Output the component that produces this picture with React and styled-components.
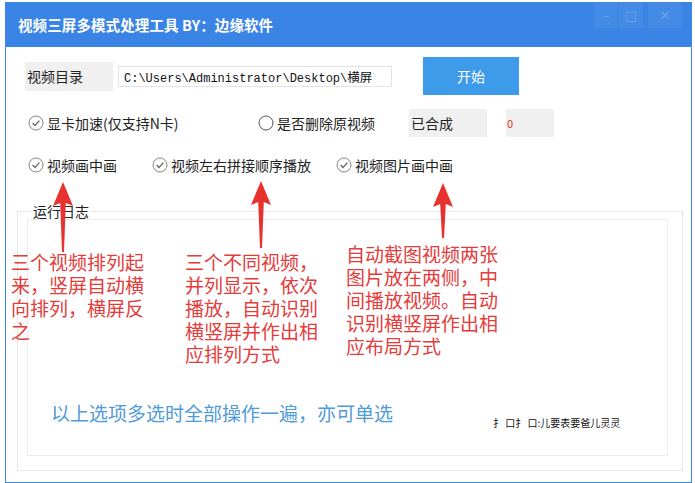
import React from 'react'
import styled, { createGlobalStyle } from 'styled-components'

const GlobalStyle = createGlobalStyle`
  body {
    margin: 0;
    background: #ffffff;
    font-family: "Noto Sans CJK SC", "Noto Sans", sans-serif;
  }
`

const Window = styled.div`
  position: relative;
  box-sizing: border-box;
  margin: 2px 0 0 5px;
  width: 687px;
  height: 481px;
  border: 1px solid #3f87e2;
  display: flex;
  flex-direction: column;
  background: #fff;
  overflow: hidden;
`

const TitleBar = styled.div`
  height: 44px;
  flex-shrink: 0;
  background: #3984e4;
  display: flex;
  justify-content: space-between;
  padding-left: 12px;
`

const Title = styled.div`
  color: #fff;
  font-weight: bold;
  font-size: 14.5px;
  line-height: 44px;
  letter-spacing: 0.1px;
`

const WinButtons = styled.div`
  display: flex;
  gap: 1px;
  height: 25px;
  margin-right: 9px;
`

const WinButton = styled.div`
  width: ${p => p.$w}px;
  margin-left: ${p => p.$gap || 0}px;
  background: rgba(255, 255, 255, 0.06);
  color: rgba(255, 255, 255, 0.22);
  display: flex;
  align-items: center;
  justify-content: center;
  font-family: "DejaVu Sans", sans-serif;
  font-size: 13px;
`

const Body = styled.div`
  display: flex;
  flex-direction: column;
`

const Row = styled.div`
  display: flex;
  align-items: center;
  height: ${p => p.$h}px;
  margin-top: ${p => p.$top}px;
  padding-left: ${p => p.$left}px;
`

const GrayLabel = styled.div`
  box-sizing: border-box;
  width: ${p => p.$w}px;
  height: ${p => p.$h}px;
  margin-left: ${p => p.$gap || 0}px;
  background: #f0f0f0;
  color: ${p => p.$red ? '#e03030' : '#222'};
  font-size: ${p => p.$red ? 11 : 14}px;
  padding-left: ${p => p.$red ? 1 : 2}px;
  display: flex;
  align-items: center;
`

const PathField = styled.div`
  box-sizing: border-box;
  margin-left: 5px;
  width: 274px;
  height: 21px;
  border: 1px solid #e4e4e4;
  padding-left: 5px;
  font-family: "Liberation Mono", monospace;
  font-size: 12px;
  line-height: 19px;
  color: #111;
  white-space: nowrap;
  overflow: hidden;
`

const CjkInMono = styled.span`
  font-family: "Noto Sans CJK SC", sans-serif;
  font-size: 12.5px;
`

const StartButton = styled.div`
  margin-left: 31px;
  width: 96px;
  height: 38px;
  background: #3d9be9;
  color: #fff;
  font-size: 14px;
  display: flex;
  align-items: center;
  justify-content: center;
`

const Option = styled.div`
  width: ${p => (p.$w ? `${p.$w}px` : 'auto')};
  display: flex;
  align-items: center;
  gap: 3px;
  font-size: 14px;
  color: #222;
  white-space: nowrap;
`

const Mark = styled.svg`
  width: 16px;
  height: 16px;
  flex-shrink: 0;
`

const CheckMark = () => (
  <Mark viewBox="0 0 16 16">
    <circle cx="8" cy="8" r="7" fill="#fff" stroke="#858585" strokeWidth="1" />
    <path d="M4.6 8.1 L7 10.5 L11.4 5.6" fill="none" stroke="#6a6a6a" strokeWidth="1.4" />
  </Mark>
)

const RadioMark = () => (
  <Mark viewBox="0 0 16 16">
    <circle cx="8" cy="8" r="7" fill="#fff" stroke="#555" strokeWidth="1" />
  </Mark>
)

const LogBox = styled.fieldset`
  box-sizing: border-box;
  margin: 28px 0 0 11px;
  width: 666px;
  height: 268px;
  min-width: 0;
  border: 1px solid #e7e7e7;
  padding: 0 14px 14px 9px;
`

const LogTitle = styled.legend`
  font-size: 14px;
  line-height: 16px;
  color: #222;
  padding: 0 2px;
  margin-left: 4px;
`

const LogPanel = styled.div`
  box-sizing: border-box;
  height: 237px;
  border: 1px solid #ededed;
  background: #fff;
  display: flex;
  flex-direction: column;
  justify-content: flex-end;
  padding: 0 0 25px 23px;
`

const Footer = styled.div`
  display: flex;
  align-items: flex-start;
`

const Hint = styled.div`
  font-size: 19px;
  line-height: 24px;
  color: #4f9ad8;
  white-space: nowrap;
`

const Tiny = styled.div`
  margin: 15px 0 0 100px;
  font-size: 10px;
  line-height: 14px;
  color: #111;
  white-space: nowrap;
`

const Note = styled.div`
  position: absolute;
  left: ${p => p.$x}px;
  top: ${p => p.$y}px;
  font-size: 19px;
  line-height: 23px;
  color: #e43b3b;
  white-space: nowrap;
`

const ArrowSvg = styled.svg`
  position: absolute;
  left: ${p => p.$x - 12}px;
  top: ${p => p.$y}px;
  width: 24px;
  overflow: visible;
`

const Arrow = ({ x, y, len }) => (
  <ArrowSvg $x={x} $y={y} height={len} viewBox={`0 0 24 ${len}`}>
    <path
      d={`M12 0 L22 24 L14.8 21 L13 ${len} L11 ${len} L9.2 21 L2 24 Z`}
      fill="#e8322f"
    />
  </ArrowSvg>
)

const notes = [
  { x: 5, y: 247, lines: ['三个视频排列起', '来，竖屏自动横', '向排列，横屏反', '之'] },
  { x: 179, y: 247, lines: ['三个不同视频，', '并列显示，依次', '播放，自动识别', '横竖屏并作出相', '应排列方式'] },
  { x: 340, y: 239, lines: ['自动截图视频两张', '图片放在两侧，中', '间播放视频。自动', '识别横竖屏作出相', '应布局方式'] },
]

export default function App() {
  return (
    <>
      <GlobalStyle />
      <Window>
        <TitleBar>
          <Title>视频三屏多模式处理工具 BY：边缘软件</Title>
          <WinButtons>
            <WinButton $w={24}>–</WinButton>
            <WinButton $w={24}>□</WinButton>
            <WinButton $w={34} $gap={4}>✕</WinButton>
          </WinButtons>
        </TitleBar>

        <Body>
          <Row $h={38} $top={10} $left={19}>
            <GrayLabel $w={88} $h={29}>视频目录</GrayLabel>
            <PathField>
              C:\Users\Administrator\Desktop\<CjkInMono>横屏</CjkInMono>
            </PathField>
            <StartButton>开始</StartButton>
          </Row>

          <Row $h={28} $top={14} $left={22}>
            <Option $w={230}><CheckMark />显卡加速(仅支持N卡)</Option>
            <Option $w={151}><RadioMark />是否删除原视频</Option>
            <GrayLabel $w={78} $h={28}>已合成</GrayLabel>
            <GrayLabel $w={48} $h={28} $gap={19} $red>0</GrayLabel>
          </Row>

          <Row $h={20} $top={18} $left={22}>
            <Option $w={124}><CheckMark />视频画中画</Option>
            <Option $w={184}><CheckMark />视频左右拼接顺序播放</Option>
            <Option><CheckMark />视频图片画中画</Option>
          </Row>

          <LogBox>
            <LogTitle>运行日志</LogTitle>
            <LogPanel>
              <Footer>
                <Hint>以上选项多选时全部操作一遍，亦可单选</Hint>
                <Tiny>扌 口扌 口:儿要表要爸儿灵灵</Tiny>
              </Footer>
            </LogPanel>
          </LogBox>
        </Body>

        <Arrow x={57} y={179} len={70} />
        <Arrow x={255} y={178} len={67} />
        <Arrow x={437} y={180} len={55} />

        {notes.map((n, i) => (
          <Note key={i} $x={n.x} $y={n.y}>
            {n.lines.map((l, j) => <div key={j}>{l}</div>)}
          </Note>
        ))}
      </Window>
    </>
  )
}
